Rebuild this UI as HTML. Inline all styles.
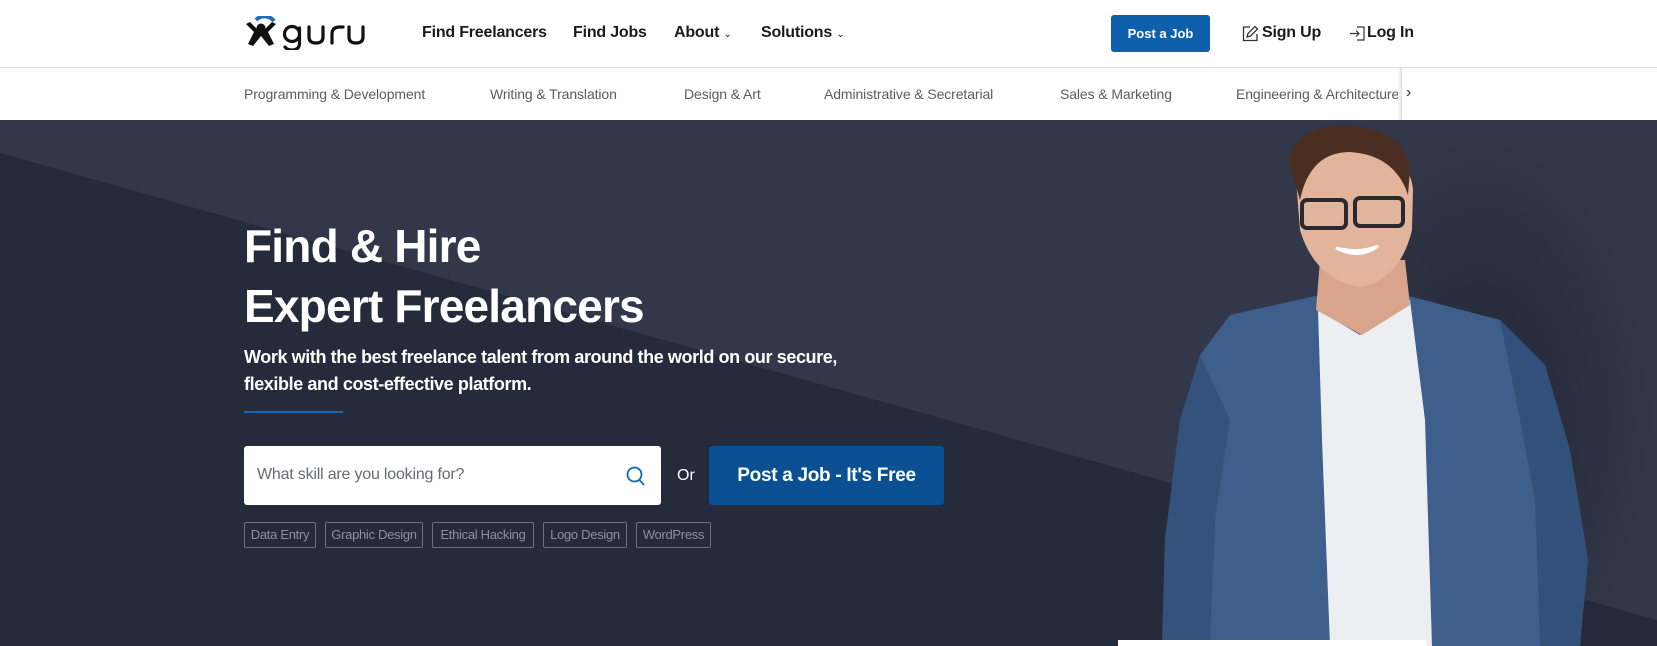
<!DOCTYPE html>
<html><head><meta charset="utf-8"><style>
*{margin:0;padding:0;box-sizing:border-box}
html,body{width:1657px;height:646px;overflow:hidden}
body{font-family:"Liberation Sans",Arial,sans-serif;background:#fff;position:relative}
.abs{position:absolute;white-space:nowrap}
.nav{font-size:16px;font-weight:bold;color:#1b1b1f;top:24px;letter-spacing:-0.2px}
.cat{font-size:14px;color:#585c66;top:86px;letter-spacing:-0.1px}
.tag{position:absolute;top:522px;height:26px;border:1px solid #6a7080;border-radius:2px;color:#8a90a0;font-size:13px;line-height:24px;text-align:center;letter-spacing:-0.3px}
</style></head><body>
<svg class="abs" style="left:244px;top:16px" width="132" height="34" viewBox="0 0 132 34">
<path d="M12 4 A12 12 0 0 1 30 5" stroke="#1f6fc0" stroke-width="4" fill="none"/>
<circle cx="17" cy="12" r="4.5" fill="#111"/>
<path d="M2 8 L10 16 L4 28 L9 30 L17 20 L25 30 L30 28 L24 16 L32 8 L28 6 L20 14 L14 14 L6 6 Z" fill="#111"/>
<g fill="none" stroke="#111" stroke-width="3.2" stroke-linecap="round">
<circle cx="48" cy="18" r="7.5"/><path d="M55.5 12 V27 Q55.5 34 48 34 Q43 34 41 31"/>
<path d="M65 11 V21 Q65 27 72 27 Q79 27 79 21 V11"/>
<path d="M88 27 V18 Q88 11 96 11 H99"/>
<path d="M105 11 V21 Q105 27 112 27 Q119 27 119 21 V11"/>
</g>
</svg>
<div class="abs nav" style="left:422px">Find Freelancers</div>
<div class="abs nav" style="left:573px">Find Jobs</div>
<div class="abs nav" style="left:674px">About <span style="font-size:10px;font-weight:normal">&#8964;</span></div>
<div class="abs nav" style="left:761px">Solutions <span style="font-size:10px;font-weight:normal">&#8964;</span></div>
<div class="abs" style="left:1111px;top:15px;width:99px;height:37px;background:#0e5fac;border-radius:3px;color:#fff;font-size:13px;font-weight:bold;text-align:center;line-height:37px">Post a Job</div>
<svg class="abs" style="left:1242px;top:25px" width="17" height="17" viewBox="0 0 17 17"><path d="M8 2H1.5V15.5H15V9" fill="none" stroke="#333" stroke-width="1.3"/><path d="M5 12L6 8.5 13 1.5 15.5 4 8.5 11Z" fill="none" stroke="#333" stroke-width="1.3"/></svg>
<div class="abs nav" style="left:1262px">Sign Up</div>
<svg class="abs" style="left:1349px;top:26px" width="17" height="15" viewBox="0 0 17 15"><path d="M1 7.5H10M7 4.5L10 7.5 7 10.5M8 1H15V14H8" fill="none" stroke="#333" stroke-width="1.2"/></svg>
<div class="abs nav" style="left:1367px">Log In</div>
<div class="abs" style="left:0;top:67px;width:1657px;height:1px;background:#dcdcdc"></div>
<div class="abs cat" style="left:244px">Programming &amp; Development</div>
<div class="abs cat" style="left:490px">Writing &amp; Translation</div>
<div class="abs cat" style="left:684px">Design &amp; Art</div>
<div class="abs cat" style="left:824px">Administrative &amp; Secretarial</div>
<div class="abs cat" style="left:1060px">Sales &amp; Marketing</div>
<div class="abs cat" style="left:1236px;width:165px;overflow:hidden">Engineering &amp; Architecture</div>
<div class="abs" style="left:1398px;top:68px;width:4px;height:52px;background:linear-gradient(90deg,#fff,#ddd)"></div>
<div class="abs" style="left:1406px;top:84px;font-size:16px;color:#333">&#8250;</div>
<svg class="abs" style="left:0;top:120px" width="1657" height="526" viewBox="0 0 1657 526">
<rect width="1657" height="526" fill="#262b3c"/>
<polygon points="0,0 1657,0 1657,500 0,33" fill="#323849"/>
<defs><radialGradient id="sh" cx="0.5" cy="0.5" r="0.5"><stop offset="0" stop-color="#1e2232" stop-opacity="0.8"/><stop offset="1" stop-color="#1e2232" stop-opacity="0"/></radialGradient></defs>
<ellipse cx="1480" cy="300" rx="180" ry="300" fill="url(#sh)"/>
<path d="M1230 195 L1320 175 L1405 175 L1500 200 L1545 245 L1570 330 L1588 440 L1580 526 L1162 526 L1165 420 L1180 300 L1200 235 Z" fill="#3e5f8c"/>
<path d="M1200 235 L1180 300 L1165 420 L1162 526 L1210 526 L1215 400 L1230 300Z" fill="#34527c"/>
<path d="M1500 200 L1545 245 L1570 330 L1588 440 L1580 526 L1540 526 L1535 380 L1520 300Z" fill="#33507a"/>
<path d="M1318 190 L1360 215 L1410 180 L1425 300 L1432 526 L1330 526 L1322 320 Z" fill="#eceef2"/>
<path d="M1320 140 L1405 140 L1410 185 L1362 215 L1316 190 Z" fill="#d8a58c"/>
<path d="M1296 60 Q1300 25 1350 28 Q1410 30 1413 70 L1412 110 Q1400 160 1360 167 Q1315 160 1300 110 Z" fill="#e2b49c"/>
<path d="M1288 40 Q1300 2 1352 6 Q1405 10 1410 50 L1408 75 Q1395 35 1350 32 Q1310 32 1300 80 Z" fill="#4a2e22"/>
<rect x="1302" y="80" width="44" height="28" rx="5" fill="none" stroke="#2a2a2e" stroke-width="4"/>
<rect x="1355" y="78" width="48" height="28" rx="5" fill="none" stroke="#2a2a2e" stroke-width="4"/>
<path d="M1336 128 Q1360 140 1378 126 Q1360 134 1336 128Z" fill="#fff" stroke="#fff" stroke-width="3"/>
</svg>
<div class="abs" style="left:1118px;top:640px;width:309px;height:6px;background:#fff"></div>
<div class="abs" style="left:244px;top:216px;color:#fff;font-size:46px;font-weight:bold;line-height:60px;letter-spacing:-0.8px">Find &amp; Hire<br>Expert Freelancers</div>
<div class="abs" style="left:244px;top:344px;color:#fff;font-size:18px;font-weight:bold;line-height:27px;letter-spacing:-0.4px">Work with the best freelance talent from around the world on our secure,<br>flexible and cost-effective platform.</div>
<div class="abs" style="left:244px;top:411px;width:99px;height:2px;background:#1565b5"></div>
<div class="abs" style="left:244px;top:446px;width:417px;height:59px;background:#fff;border-radius:3px"></div>
<div class="abs" style="left:257px;top:466px;font-size:16px;color:#666a72;letter-spacing:-0.2px">What skill are you looking for?</div>
<svg class="abs" style="left:626px;top:466px" width="20" height="21" viewBox="0 0 20 21"><circle cx="8.5" cy="8.5" r="7" fill="none" stroke="#1565b5" stroke-width="1.8"/><path d="M13.5 14 L18 19" stroke="#1565b5" stroke-width="1.8"/></svg>
<div class="abs" style="left:677px;top:467px;font-size:16px;color:#fff">Or</div>
<div class="abs" style="left:709px;top:446px;width:235px;height:59px;background:#0a5093;border-radius:3px;color:#fff;font-size:19px;font-weight:bold;text-align:center;line-height:59px;letter-spacing:-0.3px">Post a Job - It's Free</div>
<div class="tag" style="left:244px;width:72px">Data Entry</div>
<div class="tag" style="left:325px;width:98px">Graphic Design</div>
<div class="tag" style="left:432px;width:102px">Ethical Hacking</div>
<div class="tag" style="left:543px;width:84px">Logo Design</div>
<div class="tag" style="left:636px;width:75px">WordPress</div>
</body></html>
